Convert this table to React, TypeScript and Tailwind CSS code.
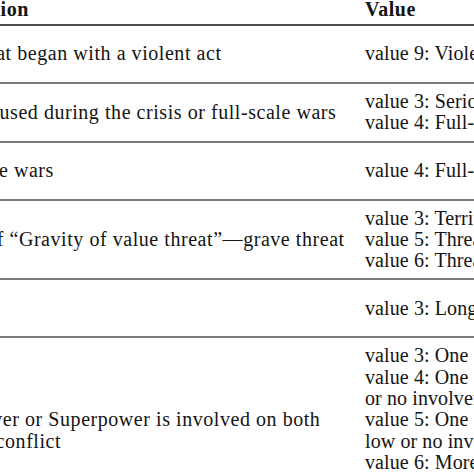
type Row = { desc: string[]; values: string[] };

const rows: Row[] = [
  { desc: ["Crisis that began with a violent act"], values: ["value 9: Violence"] },
  {
    desc: ["Military used during the crisis or full-scale wars"],
    values: ["value 3: Serious clashes", "value 4: Full-scale war"],
  },
  { desc: ["Full-scale wars"], values: ["value 4: Full-scale war"] },
  {
    desc: ["Values of \u201CGravity of value threat\u201D\u2014grave threat"],
    values: [
      "value 3: Territorial threat",
      "value 5: Threat to influence",
      "value 6: Threat to existence",
    ],
  },
  { desc: ["Lengthy"], values: ["value 3: Long-war protracted conflict"] },
  {
    desc: ["Any Power or Superpower is involved on both", "sides of conflict"],
    values: [
      "value 3: One Superpower involved",
      "value 4: One Superpower with high",
      "or no involvement of other",
      "value 5: One Superpower and",
      "low or no involvement",
      "value 6: More than one",
      "Superpower involved",
      "on opposite sides",
    ],
  },
];

export default function App() {
  return (
    <div
      className="w-[474px] h-[474px] overflow-hidden bg-white text-[#141414] text-[20px] leading-[21.3px] tracking-[0.55px]"
      style={{ fontFamily: '"Liberation Serif", "Times New Roman", serif' }}
    >
      <div className="-ml-[76px] w-[760px]">
        <div className="flex h-[26px] items-end border-b-2 border-[#4c4c4c] pb-[4px] font-bold">
          <div className="w-[441px] shrink-0 pr-[15px]">Description</div>
          <div className="flex-1">Value</div>
        </div>
        {rows.map((r, i) => (
          <div
            key={i}
            className="flex min-h-[58px] items-center border-b-2 border-[#7a7a7a] py-[7px]"
          >
            <div className="w-[441px] shrink-0 pr-[15px]">
              {r.desc.map((d, j) => (
                <div key={j}>{d}</div>
              ))}
            </div>
            <div className="flex-1 whitespace-nowrap tracking-[0.1px]">
              {r.values.map((v, j) => (
                <div key={j}>{v}</div>
              ))}
            </div>
          </div>
        ))}
      </div>
    </div>
  );
}
